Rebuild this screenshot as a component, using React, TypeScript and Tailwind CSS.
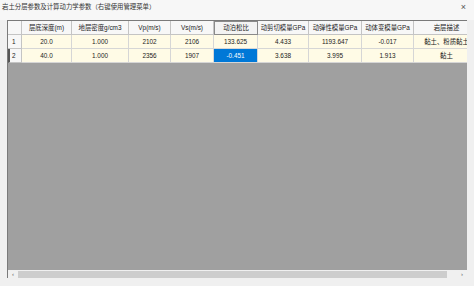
import React from 'react';

const cols = [
  { title: '层底深度(m)', w: 'w-[50px]' },
  { title: '地层密度g/cm3', w: 'w-[57px]' },
  { title: 'Vp(m/s)', w: 'w-[42px]' },
  { title: 'Vs(m/s)', w: 'w-[43px]' },
  { title: '动泊松比', w: 'w-[44px]' },
  { title: '动剪切模量GPa', w: 'w-[51px]' },
  { title: '动弹性模量GPa', w: 'w-[53px]' },
  { title: '动体变模量GPa', w: 'w-[52px]' },
  { title: '岩层描述', w: 'w-[66px]' },
];

const rows = [
  ['20.0', '1.000', '2102', '2106', '133.625', '4.433', '1193.647', '-0.017', '黏土、粉质黏土'],
  ['40.0', '1.000', '2356', '1907', '-0.451', '3.638', '3.995', '1.913', '黏土'],
];

export default function App() {
  return (
    <div
      className="flex h-[286px] w-[474px] flex-col overflow-hidden bg-[#f0f0f0] text-[6.4px] text-[#222]"
      style={{ fontFamily: '"Liberation Sans", "Noto Sans CJK SC", sans-serif' }}
    >
      {/* Title bar */}
      <div className="flex h-[20px] shrink-0 items-start justify-between bg-[#f7f7f7] pl-[2px] pr-[8px] pt-[3px]">
        <span className="leading-[8px] text-[#333]">岩土分层参数及计算动力学参数（右键使用管理菜单）</span>
        <span className="text-[9px] leading-[9px] text-[#555]">×</span>
      </div>

      {/* Grid viewport */}
      <div className="flex h-[258px] shrink-0 pl-[7px] pr-[7px]">
        <div className="flex w-[460px] flex-col overflow-hidden border-l border-t border-[#7a7a7a] bg-[#a0a0a0]">
          <div className="flex flex-1 flex-col overflow-hidden">
            {/* Header */}
            <div className="flex h-[14px] shrink-0">
              <div className="w-[14px] shrink-0 border-b border-r border-[#c4c4c4] bg-[#f7f7f7]" />
              {cols.map((c, i) => (
                <div
                  key={c.title}
                  className={`${c.w} flex shrink-0 items-center justify-center whitespace-nowrap ${
                    i === 4
                      ? 'border border-[#8a8a8a] bg-[#f3f3f3]'
                      : 'border-b border-r border-[#c4c4c4] bg-[#f7f7f7]'
                  }`}
                >
                  {c.title}
                </div>
              ))}
            </div>
            {/* Rows */}
            {rows.map((r, ri) => (
              <div key={ri} className="flex h-[14px] shrink-0">
                <div
                  className={`flex w-[14px] shrink-0 items-center border-b border-r border-[#c4c4c4] bg-[#f7f7f7] ${
                    ri === 1 ? 'border-l-2 border-l-[#555] pl-[2px]' : 'pl-[4px]'
                  }`}
                >
                  {ri + 1}
                </div>
                {r.map((v, ci) => {
                  const selected = ri === 1 && ci === 4;
                  return (
                    <div
                      key={ci}
                      className={`${cols[ci].w} flex shrink-0 items-center justify-center overflow-hidden whitespace-nowrap border-b border-r border-[#d6d6d6] ${
                        selected ? 'bg-[#0078d7] text-white' : 'bg-[#fffbe6]'
                      }`}
                    >
                      {v}
                    </div>
                  );
                })}
              </div>
            ))}
          </div>

          {/* Horizontal scrollbar */}
          <div className="flex h-[8px] shrink-0 items-center bg-[#f0f0f0]">
            <div className="flex w-[10px] items-center justify-center text-[6px] leading-[6px] text-[#606060]">‹</div>
            <div className="h-[7px] w-[429px] bg-[#cdcdcd]" />
            <div className="flex-1" />
            <div className="flex w-[10px] items-center justify-center text-[6px] leading-[6px] text-[#606060]">›</div>
          </div>
        </div>
      </div>
    </div>
  );
}
